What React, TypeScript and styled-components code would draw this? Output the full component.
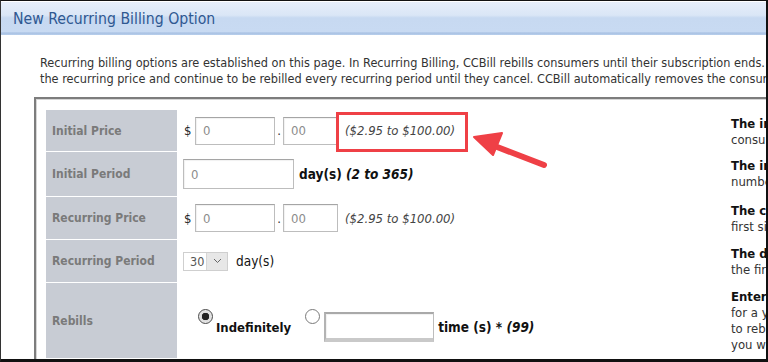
import styled, { createGlobalStyle } from "styled-components"

const GlobalStyle = createGlobalStyle`
    html, body {
        margin: 0;
        padding: 0;
        background: #fff;
        overflow: hidden;
    }
`

const font = `"DejaVu Sans Condensed", "Liberation Sans", sans-serif`

const rows = [
    { label: "Initial Price", height: 41, desc: ["The initial price", "consumers will be charged at signup."] },
    { label: "Initial Period", height: 44, desc: ["The initial period", "number of days the initial price covers."] },
    { label: "Recurring Price", height: 42, desc: ["The cost of each rebill", "first signup period ends."] },
    { label: "Recurring Period", height: 42, desc: ["The days between rebills", "the first rebill happens."] },
    { label: "Rebills", height: 75, offset: 13, desc: ["Enter the number of rebills", "for a year subscription,", "to rebill indefinitely", "you want."] },
]

const PriceInputs = ({ hint }: { hint: string }) => (
    <>
        <Dollar>$</Dollar>
        <TextBox $w={80} $h={28} defaultValue="0" />
        <Dot>.</Dot>
        <TextBox $w={55} $h={28} defaultValue="00" />
        <Hint>{hint}</Hint>
    </>
)

const RowControls = ({ index }: { index: number }) => {
    switch (index) {
        case 0:
        case 2:
            return <PriceInputs hint="($2.95 to $100.00)" />
        case 1:
            return (
                <>
                    <TextBox $w={111} $h={30} defaultValue="0" />
                    <Unit $bold>day(s) <em>(2 to 365)</em></Unit>
                </>
            )
        case 3:
            return (
                <>
                    <Select>
                        <span className="value">30</span>
                        <span className="button">
                            <svg width="9" height="6" viewBox="0 0 9 6">
                                <path d="M1 1l3.5 3.5L8 1" fill="none" stroke="#666" strokeWidth="1" />
                            </svg>
                        </span>
                    </Select>
                    <Unit $gap={8}>day(s)</Unit>
                </>
            )
        case 4:
            return (
                <>
                    <Radio $checked $gap={15} />
                    <RadioLabel>Indefinitely</RadioLabel>
                    <Radio $gap={14} />
                    <TextBox $w={110} $h={30} $gap={4} $inset />
                    <Unit $bold $gap={4}>time (s) * <em>(99)</em></Unit>
                </>
            )
        default:
            return null
    }
}

export default function App() {
    return (
        <>
            <GlobalStyle />
            <Frame>
                <Header>New Recurring Billing Option</Header>
                <Intro>
                    <div>Recurring billing options are established on this page. In Recurring Billing, CCBill rebills consumers until their subscription ends. Consumers are charged</div>
                    <div>the recurring price and continue to be rebilled every recurring period until they cancel. CCBill automatically removes the consumer's access when</div>
                </Intro>
                <Panel>
                    {rows.map((row, i) => (
                        <Row key={row.label} $h={row.height}>
                            <Label>{row.label}</Label>
                            <Controls $offset={row.offset}><RowControls index={i} /></Controls>
                            <Desc>
                                <strong>{row.desc[0]}</strong>
                                {row.desc.slice(1).map((line) => (
                                    <span key={line}>{line}</span>
                                ))}
                            </Desc>
                        </Row>
                    ))}
                    <Row $h={40}>
                        <Label />
                        <Controls />
                        <Desc />
                    </Row>
                </Panel>
                <Annotation width="768" height="362" viewBox="0 0 768 362">
                    <rect x="337.5" y="113.5" width="129" height="37" fill="none" stroke="#ef4046" strokeWidth="3" />
                    <line x1="492" y1="145" x2="544" y2="165" stroke="#ef4046" strokeWidth="6" strokeLinecap="round" />
                    <polygon points="474,137 502,133 493,155" fill="#ef4046" stroke="#ef4046" strokeWidth="2" strokeLinejoin="round" />
                </Annotation>
            </Frame>
        </>
    )
}

const Frame = styled.div`
    width: 768px;
    height: 362px;
    box-sizing: border-box;
    position: relative;
    overflow: hidden;
    background: #fff;
    border-top: 1px solid #111;
    border-left: 1px solid #333;
    border-right: 2px solid #111;
    border-bottom: 3px solid #111;
    font-family: ${font};
    color: #222;
`

const Header = styled.div`
    margin-top: 1px;
    height: 33px;
    display: flex;
    align-items: center;
    padding-left: 12px;
    font-size: 15.7px;
    color: #2f5891;
    background: linear-gradient(to bottom, #e6eefa 0%, #dae6f6 40%, #c7d9f1 48%, #c8daf2 90%, #a8c1e3 94%, #b9cfec 100%);
`

const Intro = styled.div`
    padding: 20px 0 0 39px;
    font-size: 12.6px;
    line-height: 16px;
    color: #333;
    white-space: nowrap;
`

const Panel = styled.div`
    margin: 10px 0 0 33px;
    width: 820px;
    box-sizing: border-box;
    border: 2px solid #7d7d7d;
    box-shadow: inset 1px 1px 0 #d6d6d6;
    padding: 11px 0 0 10px;
    display: flex;
    flex-direction: column;
    gap: 1px;
`

const Row = styled.div<{ $h: number }>`
    height: ${(p) => p.$h}px;
    display: grid;
    grid-template-columns: 131px 554px 1fr;
`

const Label = styled.div`
    background: #c8ccd4;
    color: #7a7a7a;
    font-weight: bold;
    font-size: 12px;
    display: flex;
    align-items: center;
    padding-left: 6px;
`

const Controls = styled.div<{ $offset?: number }>`
    display: flex;
    align-items: center;
    padding-left: 6px;
    padding-top: ${(p) => p.$offset ?? 0}px;
    font-size: 13px;
    white-space: nowrap;
`

const Desc = styled.div`
    display: flex;
    flex-direction: column;
    padding-top: 6px;
    font-size: 13px;
    line-height: 16px;
    color: #333;
    white-space: nowrap;

    strong {
        color: #111;
    }
`

const Dollar = styled.span`
    width: 11px;
    padding-left: 1px;
    color: #222;
`

const Dot = styled.span`
    width: 8px;
    text-align: center;
    color: #333;
`

const TextBox = styled.input<{ $w: number; $h: number; $gap?: number; $inset?: boolean }>`
    width: ${(p) => p.$w}px;
    height: ${(p) => p.$h}px;
    box-sizing: border-box;
    margin: 0 0 0 ${(p) => p.$gap ?? 0}px;
    padding: 0 0 0 7px;
    border: 1px solid #bdbdbd;
    border-top-color: #a5a5a5;
    ${(p) => p.$inset && `
        border-top: 2px solid #a9a9a9;
        border-left: 2px solid #b3b3b3;
        border-bottom: 4px solid #c9c9c9;
    `}
    box-shadow: inset 1px 1px 1px rgba(0, 0, 0, 0.06);
    font-family: ${font};
    font-size: 13px;
    color: #8c8c8c;
    background: #fff;
    outline: none;
`

const Hint = styled.span`
    margin-left: 7px;
    font-style: italic;
    font-size: 13px;
    color: #444;
`

const Unit = styled.span<{ $bold?: boolean; $gap?: number }>`
    margin-left: ${(p) => p.$gap ?? 5}px;
    font-weight: ${(p) => (p.$bold ? "bold" : "normal")};
    font-size: 13.5px;
    color: #111;
`

const Select = styled.span`
    width: 45px;
    height: 19px;
    box-sizing: border-box;
    display: flex;
    border: 1px solid #cfcfcf;
    background: #fff;

    .value {
        flex: 1;
        padding-left: 6px;
        font-size: 12.5px;
        line-height: 17px;
        color: #555;
    }

    .button {
        width: 20px;
        display: flex;
        align-items: center;
        justify-content: center;
        background: #e7e7e7;
        border-left: 1px solid #d6d6d6;
    }
`

const Radio = styled.span<{ $checked?: boolean; $gap?: number }>`
    width: 15px;
    height: 15px;
    box-sizing: border-box;
    margin: 0 0 21px ${(p) => p.$gap ?? 0}px;
    border-radius: 50%;
    border: 1px solid ${(p) => (p.$checked ? "#4a4a4a" : "#7a7a7a")};
    background: ${(p) => (p.$checked ? "radial-gradient(circle, #222 0 3.5px, #dcdcdc 4px, #f4f4f4 100%)" : "#fff")};
    flex-shrink: 0;
`

const RadioLabel = styled.span`
    margin: 0 0 0 3px;
    font-weight: bold;
    font-size: 13px;
    color: #111;
`

const Annotation = styled.svg`
    position: absolute;
    left: -1px;
    top: -1px;
    pointer-events: none;
`
